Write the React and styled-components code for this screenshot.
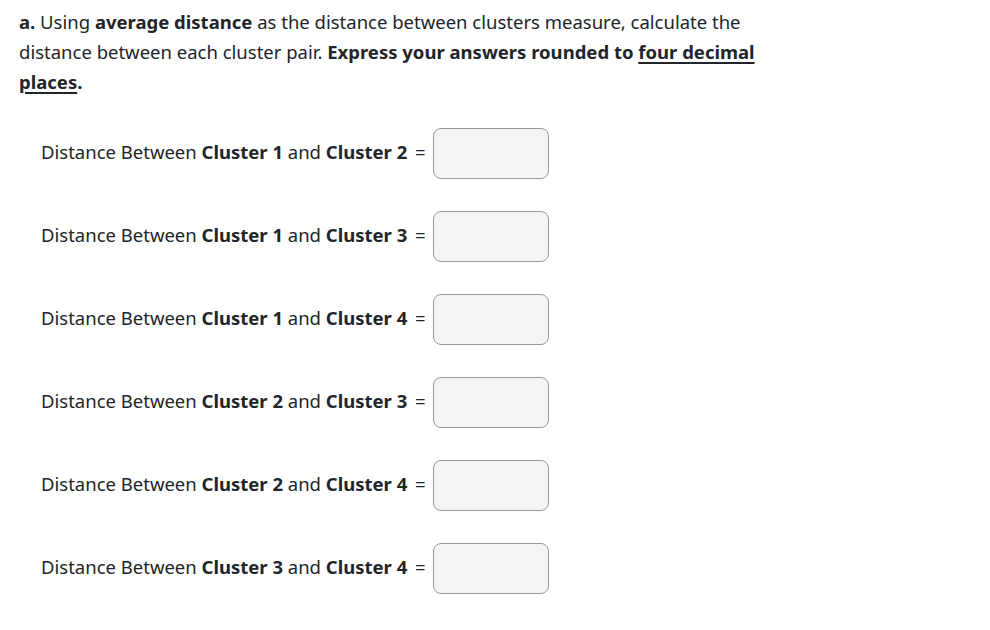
import React from 'react'
import styled, { createGlobalStyle } from 'styled-components'

const GlobalStyle = createGlobalStyle`
  body {
    margin: 0;
    background: #fff;
    font-family: "Segoe UI", "Noto Sans", "Open Sans", sans-serif;
    color: #212529;
  }
`

const Wrapper = styled.div`
  padding: 7px 19px 0 19px;
  width: 760px;
`

const Prompt = styled.p`
  margin: 0;
  font-size: 18.5px;
  line-height: 30px;

  u {
    text-decoration-thickness: 2px;
    text-underline-offset: 3px;
  }
`

const Rows = styled.div`
  display: flex;
  flex-direction: column;
  gap: 32px;
  padding: 31px 0 0 22px;
`

const Row = styled.div`
  display: flex;
  align-items: center;
  font-size: 18.5px;
  gap: 7px;
`

const Label = styled.span`
  padding-bottom: 5px;
`

const Equals = styled.span`
  margin-left: 3px;
`

const AnswerBox = styled.input`
  width: 116px;
  height: 51px;
  box-sizing: border-box;
  border: 1px solid #9a9a9a;
  border-radius: 8px;
  background: #f3f4f6;
  padding: 0 10px;
  font-size: 18px;
`

const pairs = [
  [1, 2],
  [1, 3],
  [1, 4],
  [2, 3],
  [2, 4],
  [3, 4],
]

const App = () => {
  return (
    <Wrapper>
      <GlobalStyle />
      <Prompt>
        <b>a.</b> Using <b>average distance</b> as the distance between clusters measure, calculate the
        distance between each cluster pair. <b>Express your answers rounded to <u>four decimal places</u>.</b>
      </Prompt>
      <Rows>
        {pairs.map(([a, b]) => (
          <Row key={`${a}-${b}`}>
            <Label>
              Distance Between <b>Cluster {a}</b> and <b>Cluster {b}</b> <Equals>=</Equals>
            </Label>
            <AnswerBox type='text' aria-label={`Cluster ${a} to Cluster ${b}`} />
          </Row>
        ))}
      </Rows>
    </Wrapper>
  )
}

export default App
